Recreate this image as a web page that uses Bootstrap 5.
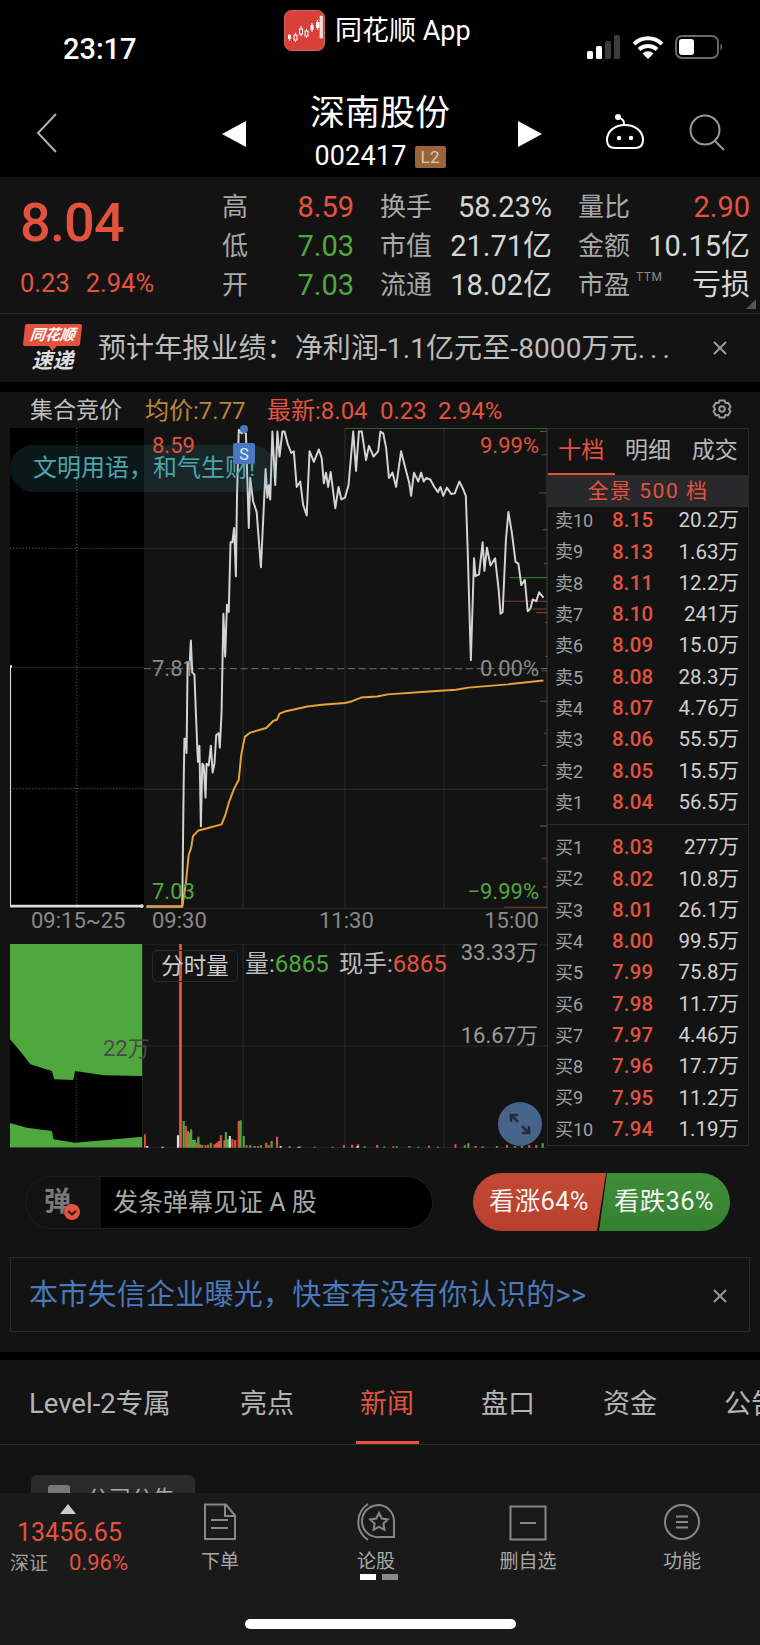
<!doctype html>
<html lang="zh">
<head>
<meta charset="utf-8">
<title>深南股份</title>
<link href="https://cdn.jsdelivr.net/npm/bootstrap@5.3.0/dist/css/bootstrap.min.css" rel="stylesheet">
<style>
:root{--rd:#e2533f;--gn:#4fa83d;--gy:#9a9a9a;--lt:#d0d0d0;--pn:#131313;}
html,body{margin:0;background:#000;}
body{width:760px;height:1645px;overflow:hidden;font-family:Roboto,"Noto Sans CJK SC",sans-serif;color:var(--lt);}
.t-rd{color:var(--rd);} .t-gn{color:var(--gn);} .t-gy{color:var(--gy);}
.hdr{height:177px;background:#000;color:#fff;}
.sb{height:84px;position:relative;padding:0 36px 0 63px;}
.sb-time{font-size:29px;font-weight:500;line-height:1;padding-top:35px;}
.sb-app{position:absolute;left:284px;top:10px;gap:10px;font-size:27px;line-height:43px;}
.sb-ic{padding-top:35px;gap:11px;}
.nv{height:93px;position:relative;}
.nv-back{position:absolute;left:36px;top:29px;}
.nv-mid{width:300px;text-align:center;}
.nv-name{font-size:35px;line-height:44px;margin-top:8px;}
.nv-code{font-size:27px;line-height:32px;margin-top:4px;letter-spacing:.2px;}
.l2{display:inline-block;background:#9a6438;color:#d8c8b8;font-size:17px;line-height:22px;width:31px;text-align:center;border-radius:2px;vertical-align:2px;margin-left:8px;}
.nv-prev{position:absolute;left:222px;top:37px;}
.nv-next{position:absolute;left:518px;top:37px;}
.nv-bot{position:absolute;left:605px;top:30px;}
.nv-srch{position:absolute;left:689px;top:30px;}
.qt{height:137px;background:var(--pn);position:relative;border-bottom:1px solid #2a2a2a;}
.qt-l{width:222px;padding:13px 0 0 20px;}
.qt-price{font-size:54px;line-height:66px;font-weight:500;color:var(--rd);letter-spacing:-.8px;}
.qt-chg{font-size:25.500px;line-height:30px;color:var(--rd);margin-top:12px;}
.qt-g{display:grid;grid-template-columns:132px 172px 172px;column-gap:26px;grid-auto-rows:39px;padding-top:11px;align-items:center;}
.qt-k{font-size:26px;color:#a8a8a8;}
.qt-v{font-size:29px;line-height:39px;color:#d6d6d6;}
.qt-v.t-rd{color:var(--rd);} .qt-v.t-gn{color:var(--gn);}
.ttm{font-size:12px;color:#8a8a8a;position:absolute;left:636px;top:91px;letter-spacing:.5px;}
.corner{position:absolute;right:4px;bottom:4px;width:0;height:0;border-left:10px solid transparent;border-bottom:10px solid #555;}
.tk{height:68px;background:var(--pn);padding-left:24px;position:relative;}
.tk-logo{width:57px;margin-right:17px;text-align:center;}
.tk-rib{display:block;background:var(--rd);color:#fff;font-size:15px;line-height:22px;font-style:italic;font-weight:700;border-radius:2px;transform:skewX(-6deg);margin-bottom:3px;position:relative;}
.tk-rib::after{content:"";position:absolute;left:26px;bottom:-5px;border:4px solid transparent;border-top:5px solid var(--rd);border-bottom:0;}
.tk-sd{display:block;color:#ddd;font-size:21px;line-height:24px;font-style:italic;font-weight:700;}
.tk-txt{font-size:28px;color:#bdbdbd;white-space:nowrap;margin-top:2px;letter-spacing:.1px;}
.tk-el{letter-spacing:5px;}
.xx{position:absolute;right:32px;}
.gap-k{height:10px;background:#000;}
.gap-k2{height:8px;background:#000;}
.cb{height:960px;background:var(--pn);position:relative;}
.cb-h{height:36px;position:relative;font-size:24px;white-space:nowrap;}
.cb-h span{display:block;}
.cb-gear{position:absolute;left:712px;top:7px;}
.cb-body{padding-left:10px;}
.cb-c{width:537px;}
.ch1{height:481px;position:relative;}
.p-l{width:134px;height:481px;display:block;flex:none;}
.p-m{width:403px;height:481px;display:block;flex:none;}
.lb{position:absolute;font-size:22px;line-height:26px;white-space:nowrap;}
.cb-h .lb{font-size:24px;}
.bub{position:absolute;left:0;top:17px;width:265px;height:47px;border-radius:24px;background:rgba(70,150,160,.16);color:#4aa5ad;font-size:24px;line-height:47px;padding-left:23px;white-space:nowrap;}
.s-m{position:absolute;left:223px;top:15px;width:22px;height:21px;background:#4a78c0;color:#dfe8f5;font-size:16px;line-height:23px;text-align:center;border-radius:2px;}
.s-d{position:absolute;left:230px;top:-3px;width:8px;height:8px;border-radius:50%;background:#4a78c0;}
.tl{height:35px;position:relative;color:#8a8a8a;}
.ch2{height:204px;position:relative;}
.p-v{display:block;flex:none;}
.fs{position:absolute;left:142px;top:6px;width:86px;height:32px;border:1px solid #2a2a2a;border-radius:5px;font-size:22.500px;line-height:30px;text-align:center;color:#ccc;}
.exp{position:absolute;left:488px;top:158px;width:44px;height:44px;border-radius:50%;background:#46648a;display:flex;align-items:center;justify-content:center;}
.ob{width:202px;height:718px;border:1px solid #2a2a2a;}
.ob-t{height:46px;border-bottom:0;}
.ob-t span{flex:1 1 0;text-align:center;font-size:23px;line-height:44px;color:#b8b8b8;}
.ob-t span.on{color:var(--rd);border-bottom:2px solid var(--rd);height:46px;}
.ob-500{height:32px;background:#29292b;color:var(--rd);font-size:21px;line-height:32px;text-align:center;letter-spacing:1.500px;margin-bottom:-2px;}
.ob-r{height:31.3px;padding:0 9px 0 7px;}
.ob-k{width:57px;font-size:18px;color:#a0a0a0;}
.ob-p{width:52px;font-size:20.5px;color:var(--rd);font-weight:500;letter-spacing:.2px;}
.ob-q{flex:1;text-align:right;font-size:20.5px;color:#cfcfcf;}
.ob-sep{height:14px;position:relative;}
.ob-sep::after{content:"";position:absolute;left:0;right:0;top:6px;border-top:1px solid #2a2a2a;}
.dm{padding:25px 30px 0 25px;}
.dm-in{width:408px;height:53px;border-radius:27px;border:1px solid #1e1e1e;overflow:hidden;margin-top:3px;}
.dm-l{width:75px;height:100%;position:relative;color:#7a7a7a;font-weight:700;font-size:27px;padding-left:18px;line-height:50px;}
.dm-ck{position:absolute;left:38px;top:27px;}
.dm-r{flex:1;height:100%;background:#000;color:#a8a8a8;font-size:25px;line-height:51px;padding-left:12px;}
.vt{height:58px;color:#f2f2f2;font-size:25.500px;line-height:56px;letter-spacing:.3px;}
.vt-r{width:133px;height:58px;padding-left:16px;background:linear-gradient(#c24a35,#b73f2c);border-radius:29px 0 0 29px;clip-path:polygon(0 0,100% 0,124px 100%,0 100%);}
.vt-g{width:131px;height:58px;margin-left:-7px;padding-left:15px;background:linear-gradient(#3f8e3a,#35802f);border-radius:0 29px 29px 0;clip-path:polygon(8px 0,100% 0,100% 100%,0 100%);}
.bn{margin:26px 10px 0;height:75px;border:1px solid #2a2a2a;padding:2px 0 0 18px;position:relative;color:#4a78b8;font-size:29px;white-space:nowrap;letter-spacing:.25px;}
.bn .xx{right:21px;}
.tb{height:85px;background:var(--pn);border-bottom:1px solid #2a2a2a;position:relative;overflow:hidden;white-space:nowrap;font-size:27px;color:#b4b4b4;}
.tb span{position:absolute;top:24px;line-height:40px;}
.tb span.on{color:var(--rd);}
.tb i{position:absolute;left:356px;top:81px;width:63px;height:4px;background:var(--rd);}
.ct{height:48px;background:var(--pn);overflow:hidden;padding:30px 0 0 31px;}
.chip{width:164px;height:40px;background:#2a2a2c;border-radius:6px;font-size:22px;color:#aaa;padding-left:56px;line-height:48px;position:relative;white-space:nowrap;}
.chip::before{content:"";position:absolute;left:17px;top:10px;width:22px;height:22px;background:#777;border-radius:3px;}
.bt{height:152px;background:#1a1a1a;position:relative;}
.bt-idx{position:absolute;left:10px;top:0;width:130px;}
.bt-tri{position:absolute;left:50px;top:11px;width:0;height:0;border:8px solid transparent;border-bottom:10px solid #ccc;border-top:0;}
.bt-n{position:absolute;left:7px;top:25px;font-size:25px;line-height:30px;color:var(--rd);}
.bt-z{position:absolute;left:0;top:58px;font-size:19px;line-height:26px;color:#a0a0a0;}
.bt-p{position:absolute;left:59px;top:56px;font-size:22px;line-height:28px;color:var(--rd);}
.bt-i{position:absolute;top:10px;width:80px;text-align:center;font-size:19px;color:#a8a8a8;line-height:26px;}
.bt-i svg{display:block;margin:0 auto 8px;}
.bt-dots{position:absolute;left:360px;top:81px;}
.bt-dots b{display:inline-block;width:16px;height:6px;background:#fff;margin-right:6px;vertical-align:top;}
.bt-dots b+b{background:#8a8a8a;}
.home{position:absolute;left:245px;top:126px;width:271px;height:10px;border-radius:5px;background:#fff;}
</style>
</head>
<body>
<header class="hdr">
  <div class="sb d-flex justify-content-between">
    <div class="sb-time">23:17</div>
    <div class="sb-app d-flex align-items-start">
      <svg width="41" height="41" viewBox="0 0 41 41"><rect x=".5" y=".5" width="40" height="40" rx="7" fill="#d9403a" stroke="#c96a62"/><path d="M5.500 24v7M11.500 23v9M17 16v10M22.500 19v9M28 13v9M33.500 10v10" stroke="#fff" fill="none"/><g fill="#fff"><rect x="4" y="25" width="3" height="4"/><rect x="26.500" y="15" width="3" height="5"/><rect x="32" y="12" width="3.500" height="6"/></g><g fill="#d9403a" stroke="#fff"><rect x="10" y="25" width="3" height="5"/><rect x="15.500" y="19" width="3" height="5"/><rect x="21" y="21" width="3" height="5"/></g><rect x="36" y="6" width="2.500" height="22" fill="#f3d2c8" stroke="#fff" stroke-width=".6"/></svg>
      <span>同花顺 App</span>
    </div>
    <div class="sb-ic d-flex align-items-start">
      <svg width="34" height="24" viewBox="0 0 34 24"><rect x="0" y="16" width="6" height="8" rx="1.5" fill="#fff"/><rect x="9" y="11" width="6" height="13" rx="1.5" fill="#fff"/><rect x="18" y="6" width="6" height="18" rx="1.5" fill="#3c3c3c"/><rect x="27" y="0" width="6" height="24" rx="1.5" fill="#3c3c3c"/></svg>
      <svg width="32" height="24" viewBox="0 0 32 24" fill="none" stroke="#fff" stroke-width="4"><path d="M2 9a20 20 0 0 1 28 0M7 14.500a13 13 0 0 1 18 0"/><path d="M16 24l-5.500-5.500a8 8 0 0 1 11 0z" fill="#fff" stroke="none"/></svg>
      <svg width="49" height="24" viewBox="0 0 49 24"><rect x="1" y="1" width="42" height="22" rx="6" fill="none" stroke="#6a6a6a" stroke-width="2"/><rect x="4" y="4" width="15" height="16" rx="3" fill="#fff"/><path d="M45.500 8.500c2 1 2 6 0 7z" fill="#6a6a6a"/></svg>
    </div>
  </div>
  <nav class="nv d-flex justify-content-center">
    <svg class="nv-back" width="22" height="40" viewBox="0 0 22 40" fill="none" stroke="#b0b0b0" stroke-width="2"><path d="M20 1L2 20l18 19"/></svg>
    <svg class="nv-prev" width="24" height="26" viewBox="0 0 24 26"><path d="M24 0v26L0 13z" fill="#fff"/></svg>
    <div class="nv-mid">
      <div class="nv-name">深南股份</div>
      <div class="nv-code">002417<span class="l2">L2</span></div>
    </div>
    <svg class="nv-next" width="24" height="26" viewBox="0 0 24 26"><path d="M0 0v26l24-13z" fill="#fff"/></svg>
    <svg class="nv-bot" width="40" height="36" viewBox="0 0 40 36" fill="none" stroke="#fff" stroke-width="2"><circle cx="13" cy="3" r="2" fill="#fff"/><path d="M14 4c5 1 5 4 5 7"/><path d="M2 26c0-9 8-15 18-15s18 6 18 15c0 5-3 8-8 8H10c-5 0-8-3-8-8z"/><circle cx="14" cy="24" r="2.200" fill="#fff" stroke="none"/><circle cx="26" cy="24" r="2.200" fill="#fff" stroke="none"/></svg>
    <svg class="nv-srch" width="38" height="38" viewBox="0 0 38 38" fill="none" stroke="#999" stroke-width="2"><circle cx="16" cy="16" r="14.500"/><path d="M26 27l9 9"/></svg>
  </nav>
</header>

<section class="qt d-flex">
  <div class="qt-l">
    <div class="qt-price">8.04</div>
    <div class="qt-chg d-flex gap-3"><span>0.23</span><span>2.94%</span></div>
  </div>
  <div class="qt-g">
    <div class="d-flex justify-content-between align-items-center"><span class="qt-k">高</span><span class="qt-v t-rd">8.59</span></div>
    <div class="d-flex justify-content-between align-items-center"><span class="qt-k">换手</span><span class="qt-v">58.23%</span></div>
    <div class="d-flex justify-content-between align-items-center"><span class="qt-k">量比</span><span class="qt-v t-rd">2.90</span></div>
    <div class="d-flex justify-content-between align-items-center"><span class="qt-k">低</span><span class="qt-v t-gn">7.03</span></div>
    <div class="d-flex justify-content-between align-items-center"><span class="qt-k">市值</span><span class="qt-v">21.71亿</span></div>
    <div class="d-flex justify-content-between align-items-center"><span class="qt-k">金额</span><span class="qt-v">10.15亿</span></div>
    <div class="d-flex justify-content-between align-items-center"><span class="qt-k">开</span><span class="qt-v t-gn">7.03</span></div>
    <div class="d-flex justify-content-between align-items-center"><span class="qt-k">流通</span><span class="qt-v">18.02亿</span></div>
    <div class="d-flex justify-content-between align-items-center"><span class="qt-k">市盈</span><span class="qt-v">亏损</span></div>
  </div>
  <span class="ttm">TTM</span>
  <i class="corner"></i>
</section>

<section class="tk d-flex align-items-center">
  <div class="tk-logo"><span class="tk-rib">同花顺</span><span class="tk-sd">速递</span></div>
  <div class="tk-txt">预计年报业绩：净利润-1.1亿元至-8000万元<span class="tk-el">...</span></div>
  <svg class="xx" width="16" height="16" viewBox="0 0 16 16" stroke="#9a9a9a" stroke-width="2"><path d="M2 2l12 12M14 2L2 14"/></svg>
</section>
<div class="gap-k"></div>

<section class="cb">
  <div class="cb-h">
    <span class="lb" style="left:30px;top:6px;font-size:23px;color:#bcbcbc">集合竞价</span>
    <span class="lb" style="left:145px;top:6px;color:#b8873a">均价:7.77</span>
    <span class="lb t-rd" style="left:267px;top:6px">最新:8.04</span>
    <span class="lb t-rd" style="left:380px;top:6px">0.23</span>
    <span class="lb t-rd" style="left:438px;top:6px">2.94%</span>
    <svg class="cb-gear" width="20" height="20" viewBox="0 0 20 20" fill="none" stroke="#9a9a9a" stroke-width="2"><path d="M7.500 1.500h5l1 2.500 2.700-.3 2.300 4-1.600 2.300 1.600 2.300-2.300 4-2.700-.3-1 2.500h-5l-1-2.500-2.700.3-2.300-4 1.600-2.300-1.600-2.300 2.300-4 2.700.3z"/><circle cx="10" cy="10" r="2.800"/></svg>
  </div>
  <div class="cb-body d-flex">
    <div class="cb-c">
      <div class="ch1 d-flex">
        <svg class="p-l" viewBox="28 105 375 1347" preserveAspectRatio="none">
          <rect x="28" y="105" width="375" height="1347" fill="#000"/>
          <g stroke="#777" stroke-width="2.500" stroke-dasharray="3 6" fill="none"><path d="M28 442H402M28 1115H402M215 105V1450"/></g>
          <path d="M28 775H402" stroke="#333" stroke-width="2.500"/>
          <path d="M29 1445V775" stroke="#ddd" stroke-width="4" fill="none"/>
          <path d="M28 1444H400" stroke="#ddd" stroke-width="8" fill="none"/>
          <circle cx="30" cy="773" r="4" fill="#ddd"/><circle cx="397" cy="1444" r="5" fill="#ddd"/>
        </svg>
        <svg class="p-m" viewBox="403 105 1127 1347" preserveAspectRatio="none">
          <g stroke="#2a2a2a" stroke-width="3" fill="none"><path d="M403 442H1530M403 1117H1530M680 105V1450M965 105V1450M1242 105V1450M403 1450H1530M1529 105V1450"/></g>
          <path d="M403 779H1530" stroke="#7a7a7a" stroke-width="2.500" stroke-dasharray="20 10"/>
          <path d="M965 105H1530" stroke="#3c7a35" stroke-width="4"/>
          <g stroke-width="3" fill="none">
            <path stroke="#2f6e2b" d="M1510 115H1530M1515 180H1530M1508 287H1530M1518 390H1530M1522 485H1530M1425 524H1530"/>
            <path stroke="#8c3a2e" d="M1408 590H1530M1490 612H1530M1500 622H1530M1525 650H1530M1525 745H1530M1515 785H1530M1510 870H1530M1522 960H1530M1516 1050H1530M1510 1220H1530M1514 1310H1530M1518 1390H1530M1410 1447H1530"/>
          </g>
          <polyline fill="none" stroke="#d4d4d4" stroke-width="5.500" stroke-linejoin="round" points="410,1445 510,1445 514,1100 516,975 520,975 522,1015 525,760 530,780 534,700 538,790 544,795 548,900 552,1000 554,1040 558,995 562,1220 566,1045 570,1050 575,1140 578,1045 584,1050 590,995 595,1070 600,1045 605,965 612,960 615,1000 620,900 625,625 630,745 635,600 640,620 645,425 650,425 655,385 660,520 663,300 668,110 676,120 680,115 688,120 692,250 696,385 700,245 708,310 718,340 730,495 743,220 748,300 752,265 756,305 762,115 770,265 776,115 782,185 790,115 796,115 805,150 815,175 822,170 830,270 840,255 848,320 858,350 866,170 878,200 892,165 900,190 906,260 912,230 918,270 925,228 938,330 947,270 955,305 965,300 975,265 988,115 996,225 1004,115 1012,115 1024,195 1032,155 1045,185 1058,170 1064,115 1072,120 1080,160 1088,245 1098,230 1108,270 1122,170 1132,210 1145,260 1150,295 1158,230 1170,255 1178,230 1185,255 1192,245 1204,250 1215,270 1225,285 1232,270 1240,295 1250,272 1262,290 1272,288 1285,255 1295,275 1303,295 1308,440 1317,755 1326,470 1330,520 1340,515 1350,425 1355,505 1362,440 1372,490 1385,470 1395,560 1400,625 1406,620 1415,420 1422,340 1432,400 1442,480 1450,485 1458,545 1468,530 1476,618 1484,610 1490,585 1500,590 1508,565 1520,580"/>
          <polyline fill="none" stroke="#e8a33d" stroke-width="5.500" stroke-linejoin="round" points="410,1445 510,1445 520,1380 528,1300 535,1280 540,1248 555,1232 580,1226 620,1215 630,1190 640,1155 655,1115 668,1090 675,1020 685,970 700,958 745,945 765,925 775,922 782,905 800,898 860,885 900,880 965,875 985,870 1010,860 1055,857 1085,851 1200,843 1275,838 1310,832 1420,823 1520,812"/>
        </svg>
        <span class="bub">文明用语，和气生财!</span>
        <span class="s-d"></span><span class="s-m">S</span>
        <span class="lb t-rd" style="left:142px;top:5px">8.59</span>
        <span class="lb t-rd" style="right:8px;top:5px">9.99%</span>
        <span class="lb" style="left:142px;top:228px;color:#8a8a8a">7.81</span>
        <span class="lb" style="right:8px;top:228px;color:#8a8a8a">0.00%</span>
        <span class="lb t-gn" style="left:142px;top:451px">7.03</span>
        <span class="lb t-gn" style="right:8px;top:451px">−9.99%</span>
      </div>
      <div class="tl">
        <span class="lb" style="left:21px;top:-1px">09:15~25</span>
        <span class="lb" style="left:142px;top:-1px">09:30</span>
        <span class="lb" style="left:309px;top:-1px">11:30</span>
        <span class="lb" style="right:8px;top:-1px">15:00</span>
      </div>
      <div class="ch2 d-flex">
        <svg class="p-v" width="134" height="204" viewBox="28 44 375 612" preserveAspectRatio="none">
          <rect x="28" y="44" width="370" height="611" fill="#4fa83d"/>
          <path d="M28 330L40 345 60 370 85 405 145 425 152 450 205 452 210 425 290 438 398 440V622L300 632 210 640 150 630 145 605 75 595 30 582 28 582z" fill="#000"/>
          <path d="M215 425V640" stroke="#777" stroke-width="2" stroke-dasharray="3 5"/>
          <path d="M28 655H400" stroke="#333" stroke-width="2"/>
        </svg>
        <svg class="p-v" width="403" height="204" viewBox="403 44 1127 612" preserveAspectRatio="none">
          <g stroke="#2a2a2a" stroke-width="3" fill="none"><path d="M403 350H1530M403 44H1530M680 44V655M965 44V655M1242 44V655M403 655H1530"/></g>
          <g fill="none" stroke-width="6">
            <path stroke="#e2533f" d="M405 655V615M520 655V590M526 655V605M550 655V640M560 655V645M575 655V648M582 655V646M600 655V645M606 655V640M612 655V635M618 655V618M628 655V632M650 655V630M658 655V632M668 655V575M690 655V648M722 655V650M745 655V640M752 655V648M775 655V622M962 655V648M985 655V646M1002 655V645M1055 655V647M1100 655V651M1145 655V650M1200 655V649M1274 655V645M1330 655V650M1418 655V646M1480 655V648M1500 655V647"/>
            <path stroke="#4fa83d" d="M514 655V575M530 655V610M535 655V600M540 655V632M545 655V632M555 655V622M566 655V647M590 655V640M632 655V608M638 655V630M673 655V573M682 655V620M700 655V648M712 655V650M730 655V648M760 655V635M810 655V651M840 655V651M880 655V652M930 655V652M1020 655V651M1075 655V651M1110 655V651M1170 655V652M1225 655V652M1310 655V642M1300 655V648M1350 655V651M1390 655V650M1440 655V650M1460 655V650M1518 655V642"/>
            <path stroke="#ddd" d="M412 655V650M455 655V652M498 655V618M643 655V620M785 655V650M835 655V652M1000 655V650"/>
          </g>
          <path d="M505 44V655" stroke="#e2533f" stroke-width="8"/>
        </svg>
        <span class="fs">分时量</span>
        <span class="lb" style="left:235px;top:7px;color:#bbb;font-size:24px">量:<span class="t-gn">6865</span></span>
        <span class="lb" style="left:329px;top:7px;color:#bbb;font-size:24px">现手:<span class="t-rd">6865</span></span>
        <span class="lb" style="right:9px;top:-4px;color:#9a9a9a">33.33万</span>
        <span class="lb" style="right:9px;top:79px;color:#9a9a9a">16.67万</span>
        <span class="lb" style="left:93px;top:92px;color:#4a4a4a">22万</span>
        <span class="exp"><svg width="28" height="28" viewBox="0 0 28 28" fill="none" stroke="#222c3a" stroke-width="2.500"><path d="M5 12V5h7M5 5l7 7M16 16l7 7M23 16v7h-7"/></svg></span>
      </div>
    </div>
    <aside class="ob">
      <div class="ob-t d-flex"><span class="on">十档</span><span>明细</span><span>成交</span></div>
      <div class="ob-500">全景 500 档</div>
      <div class="ob-r d-flex align-items-center"><span class="ob-k">卖10</span><span class="ob-p">8.15</span><span class="ob-q">20.2万</span></div>
      <div class="ob-r d-flex align-items-center"><span class="ob-k">卖9</span><span class="ob-p">8.13</span><span class="ob-q">1.63万</span></div>
      <div class="ob-r d-flex align-items-center"><span class="ob-k">卖8</span><span class="ob-p">8.11</span><span class="ob-q">12.2万</span></div>
      <div class="ob-r d-flex align-items-center"><span class="ob-k">卖7</span><span class="ob-p">8.10</span><span class="ob-q">241万</span></div>
      <div class="ob-r d-flex align-items-center"><span class="ob-k">卖6</span><span class="ob-p">8.09</span><span class="ob-q">15.0万</span></div>
      <div class="ob-r d-flex align-items-center"><span class="ob-k">卖5</span><span class="ob-p">8.08</span><span class="ob-q">28.3万</span></div>
      <div class="ob-r d-flex align-items-center"><span class="ob-k">卖4</span><span class="ob-p">8.07</span><span class="ob-q">4.76万</span></div>
      <div class="ob-r d-flex align-items-center"><span class="ob-k">卖3</span><span class="ob-p">8.06</span><span class="ob-q">55.5万</span></div>
      <div class="ob-r d-flex align-items-center"><span class="ob-k">卖2</span><span class="ob-p">8.05</span><span class="ob-q">15.5万</span></div>
      <div class="ob-r d-flex align-items-center"><span class="ob-k">卖1</span><span class="ob-p">8.04</span><span class="ob-q">56.5万</span></div>
      <div class="ob-sep"></div>
      <div class="ob-r d-flex align-items-center"><span class="ob-k">买1</span><span class="ob-p">8.03</span><span class="ob-q">277万</span></div>
      <div class="ob-r d-flex align-items-center"><span class="ob-k">买2</span><span class="ob-p">8.02</span><span class="ob-q">10.8万</span></div>
      <div class="ob-r d-flex align-items-center"><span class="ob-k">买3</span><span class="ob-p">8.01</span><span class="ob-q">26.1万</span></div>
      <div class="ob-r d-flex align-items-center"><span class="ob-k">买4</span><span class="ob-p">8.00</span><span class="ob-q">99.5万</span></div>
      <div class="ob-r d-flex align-items-center"><span class="ob-k">买5</span><span class="ob-p">7.99</span><span class="ob-q">75.8万</span></div>
      <div class="ob-r d-flex align-items-center"><span class="ob-k">买6</span><span class="ob-p">7.98</span><span class="ob-q">11.7万</span></div>
      <div class="ob-r d-flex align-items-center"><span class="ob-k">买7</span><span class="ob-p">7.97</span><span class="ob-q">4.46万</span></div>
      <div class="ob-r d-flex align-items-center"><span class="ob-k">买8</span><span class="ob-p">7.96</span><span class="ob-q">17.7万</span></div>
      <div class="ob-r d-flex align-items-center"><span class="ob-k">买9</span><span class="ob-p">7.95</span><span class="ob-q">11.2万</span></div>
      <div class="ob-r d-flex align-items-center"><span class="ob-k">买10</span><span class="ob-p">7.94</span><span class="ob-q">1.19万</span></div>
    </aside>
  </div>
  <div class="dm d-flex justify-content-between align-items-start">
    <div class="dm-in d-flex">
      <div class="dm-l">弹<svg class="dm-ck" width="16" height="16" viewBox="0 0 16 16"><circle cx="8" cy="8" r="8" fill="#e2533f"/><path d="M4 7l4 3.500L12 7" fill="none" stroke="#2a1a18" stroke-width="2"/></svg></div>
      <div class="dm-r">发条弹幕见证 A 股</div>
    </div>
    <div class="vt d-flex"><span class="vt-r">看涨64%</span><span class="vt-g">看跌36%</span></div>
  </div>
  <div class="bn d-flex align-items-center">本市失信企业曝光，快查有没有你认识的&gt;&gt;<svg class="xx" width="16" height="16" viewBox="0 0 16 16" stroke="#9a9a9a" stroke-width="2"><path d="M2 2l12 12M14 2L2 14"/></svg></div>
</section>
<div class="gap-k2"></div>

<nav class="tb">
  <span style="left:29px;font-size:27.5px">Level-2专属</span>
  <span style="left:240px">亮点</span>
  <span class="on" style="left:360px">新闻</span>
  <span style="left:481px">盘口</span>
  <span style="left:603px">资金</span>
  <span style="left:724px">公告</span>
  <i></i>
</nav>
<div class="ct"><div class="chip">公司公告</div></div>

<footer class="bt">
  <div class="bt-idx">
    <i class="bt-tri"></i>
    <span class="bt-n">13456.65</span>
    <span class="bt-z">深证</span>
    <span class="bt-p">0.96%</span>
  </div>
  <div class="bt-i" style="left:180px">
    <svg width="36" height="38" viewBox="0 0 36 38" fill="none" stroke="#888" stroke-width="2"><path d="M3 1.500h21l9 11V36H3z"/><path d="M23 2v11h10M9 17h17M9 25h17"/></svg>下单</div>
  <div class="bt-i" style="left:336px">
    <svg width="40" height="38" viewBox="0 0 40 38" fill="none" stroke="#888" stroke-width="2"><path d="M12 1C-1 10-1 28 12 37"/><path d="M38 34H24A16 16 0 1 1 38 18z"/><path d="M23 10l2.800 5.500 6 .9-4.400 4.200 1 6-5.400-2.800-5.400 2.800 1-6-4.400-4.200 6-.9z"/></svg>论股</div>
  <div class="bt-i" style="left:488px">
    <svg width="38" height="36" viewBox="0 0 38 36" fill="none" stroke="#888" stroke-width="2" style="margin-top:2px;margin-bottom:8px"><rect x="1.500" y="1.500" width="35" height="33"/><path d="M11 18h16"/></svg>删自选</div>
  <div class="bt-i" style="left:642px">
    <svg width="38" height="38" viewBox="0 0 38 38" fill="none" stroke="#888" stroke-width="2"><circle cx="19" cy="19" r="17"/><path d="M13 13.500h12M13 19h12M13 24.500h12"/></svg>功能</div>
  <div class="bt-dots"><b></b><b></b></div>
  <div class="home"></div>
</footer>
</body>
</html>
